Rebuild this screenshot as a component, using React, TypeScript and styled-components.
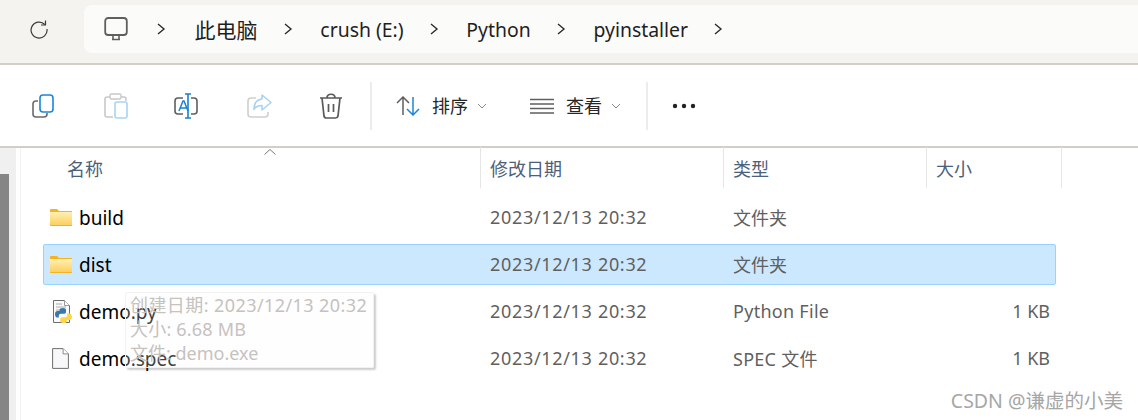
import React from "react";
import styled, { createGlobalStyle } from "styled-components";

const GlobalStyle = createGlobalStyle`
  html, body {
    margin: 0;
    padding: 0;
    background: #fff;
    overflow: hidden;
  }
  body {
    font-family: "Noto Sans", "Noto Sans CJK SC", sans-serif;
  }
`;

const Page = styled.div`
  position: relative;
  width: 1138px;
  height: 420px;
  overflow: hidden;
  display: flex;
  flex-direction: column;
`;

const AddressRow = styled.div`
  height: 65px;
  flex: none;
  box-sizing: border-box;
  padding: 5px 0 10px 0;
  display: flex;
  background: #f5f3f0;
  border-bottom: 2px solid #d2cdc5;
`;

const RefreshSlot = styled.div`
  width: 84px;
  flex: none;
  display: flex;
  align-items: center;
  justify-content: center;
  padding-right: 6px;
  box-sizing: border-box;
`;

const Breadcrumbs = styled.div`
  flex: 1;
  display: flex;
  align-items: center;
  background: #fbfbf9;
  border-radius: 8px 0 0 8px;
  padding-left: 20px;
`;

const Crumb = styled.span<{ $cjk?: boolean }>`
  font-size: ${(p) => (p.$cjk ? 21 : 19.4)}px;
  color: #1f1f1f;
  white-space: nowrap;
  margin: ${(p) => (p.$cjk ? "-1px 0 0 1.2px" : "0")};
`;

const CrumbChevron = styled.svg`
  flex: none;
  width: 10px;
  height: 14px;
  margin: 0 26.4px;
`;

const Toolbar = styled.div`
  height: 83px;
  flex: none;
  box-sizing: border-box;
  display: flex;
  align-items: center;
  background: #fff;
  border-bottom: 2px solid #d2cdc5;
  padding-left: 28px;
`;

const ToolIcon = styled.svg<{ $last?: boolean }>`
  flex: none;
  width: 30px;
  height: 30px;
  margin-right: ${(p) => (p.$last ? 24 : 42)}px;
`;

const ToolDivider = styled.div`
  width: 2px;
  height: 48px;
  flex: none;
  background: #ececec;
`;

const MenuButton = styled.div<{ $width: number }>`
  width: ${(p) => p.$width}px;
  flex: none;
  box-sizing: border-box;
  display: flex;
  align-items: center;
  padding-left: 24px;
`;

const MenuLabel = styled.span`
  font-size: 18px;
  color: #262626;
  margin: -2px 0 0 12px;
`;

const Caret = styled.svg`
  width: 10px;
  height: 6px;
  margin-left: 9px;
`;

const MoreDots = styled.svg`
  width: 24px;
  height: 6px;
  margin-left: 24px;
`;

const Body = styled.div`
  flex: 1;
  display: flex;
`;

const ScrollTrack = styled.div`
  width: 16px;
  flex: none;
  background: #f0f0f0;
  border-right: 1px solid #fff;
  box-shadow: 3px 0 0 #fff, 4px 0 0 #f2f2f2;
`;

const ScrollThumb = styled.div`
  width: 9px;
  height: 100%;
  margin-top: 26px;
  background: #858585;
`;

const ListPane = styled.div`
  flex: 1;
  padding-left: 27px;
`;

const HeaderRow = styled.div`
  position: relative;
  height: 40px;
  display: grid;
  grid-template-columns: 437px 243px 203px 135px;
`;

const HeaderCell = styled.div<{ $first?: boolean }>`
  display: flex;
  align-items: center;
  font-size: 18px;
  color: #4c607a;
  padding-left: ${(p) => (p.$first ? 23 : 9)}px;
  border-right: 1px solid #e5e5e5;
  margin-top: -1px;
`;

const SortCaret = styled.svg`
  position: absolute;
  left: 219px;
  top: 0;
  width: 14px;
  height: 8px;
`;

const Rows = styled.div`
  padding-top: 9px;
  display: flex;
  flex-direction: column;
  gap: 6px;
`;

const Row = styled.div<{ $selected?: boolean }>`
  width: 1013px;
  height: 41px;
  box-sizing: border-box;
  display: grid;
  grid-template-columns: 437px 243px 203px 1fr;
  align-items: center;
  background: ${(p) => (p.$selected ? "#cce8ff" : "transparent")};
  border: 1px solid ${(p) => (p.$selected ? "#99d1ff" : "transparent")};
  border-radius: 2px;
  font-size: 18px;
  margin-left: -1px;
`;

const NameCell = styled.div`
  display: flex;
  align-items: center;
  color: #000;
  font-size: 19px;
  padding-left: 6px;
  white-space: nowrap;
`;

const IconBox = styled.div`
  width: 29px;
  flex: none;
  display: flex;
  align-items: center;
`;

const MetaCell = styled.div<{ $spacing?: number }>`
  color: #5f5f5f;
  padding-left: 9px;
  white-space: nowrap;
  letter-spacing: ${(p) => p.$spacing ?? 0}px;
  margin-top: -1px;
`;

const SizeCell = styled.div`
  color: #5f5f5f;
  text-align: right;
  padding-right: 5px;
  white-space: nowrap;
  margin-top: -1px;
`;

const Tooltip = styled.div`
  position: absolute;
  left: 125px;
  top: 292px;
  width: 249px;
  height: 76px;
  box-sizing: border-box;
  padding: 0 0 0 4px;
  background: rgba(252, 252, 252, 0.25);
  border: 1px solid #f2f2f2;
  border-radius: 2px;
  box-shadow: 2px 2px 2px rgba(0, 0, 0, 0.2);
  color: #c6c2be;
  font-size: 18px;
  line-height: 24px;
  white-space: nowrap;
`;

const TooltipLine = styled.div<{ $spacing?: number }>`
  letter-spacing: ${(p) => p.$spacing ?? 0}px;
`;

const Watermark = styled.div`
  position: absolute;
  right: 15px;
  top: 388px;
  font-size: 19.5px;
  line-height: 26px;
  color: #a6a6a6;
  white-space: nowrap;
`;

const Chevron = () => (
  <CrumbChevron viewBox="0 0 10 14">
    <path d="M1 2l6 5-6 5" fill="none" stroke="#2b2b2b" strokeWidth="1.4" />
  </CrumbChevron>
);

const FolderIcon = () => (
  <svg width="22" height="17" viewBox="0 0 22 17">
    <defs>
      <linearGradient id="folderBody" x1="0" y1="0" x2="0" y2="1">
        <stop offset="0" stopColor="#fff0b4" />
        <stop offset="1" stopColor="#fdcf5f" />
      </linearGradient>
    </defs>
    <path d="M0 1a1 1 0 0 1 1-1h6l2 2h13v15H0z" fill="#f5b31f" />
    <rect y="3" width="22" height="13" fill="url(#folderBody)" />
  </svg>
);

const PythonIcon = () => (
  <svg width="19" height="23" viewBox="0 0 19 23" style={{ marginLeft: 3 }}>
    <path d="M.5.5h11l5 5v17H.5z" fill="#fafafa" stroke="#6e6e6e" />
    <path d="M11.500.5v5h5" fill="#fff" stroke="#9a9a9a" />
    <path d="M3 4h6M3 7h10M3 10h4" stroke="#a8a8a8" />
    <path d="M10 8c-2.500 0-3.500.8-3.500 2.300V11h-2C3 11 2 12.200 2 14s.8 3.500 2 3.500h1.800v-1.800c0-1.200 1-2 2-2h3.500c1 0 1.700-.8 1.700-1.700v-2.500C13 8.800 11.800 8 10 8z" fill="#3a78ab" />
    <path d="M10.500 23c2.500 0 3.500-.8 3.500-2.300V20h2.500c1.200 0 2.500-1.200 2.500-3s-1-3.500-2.500-3.500h-2.200v1.800c0 1.200-1 2-2 2H9c-1 0-1.700.8-1.700 1.700v1.700c0 1.500 1.400 2.300 3.200 2.300z" fill="#fdd54a" />
  </svg>
);

const BlankFileIcon = () => (
  <svg width="17" height="21" viewBox="0 0 17 21" style={{ marginLeft: 2 }}>
    <path d="M.6.6h10.500l5.300 5.300v14.500H.6z" fill="#f8f8fa" stroke="#6f6f6f" />
    <path d="M11.100.6v5.300h5.300" fill="#fff" stroke="#8a8a8a" />
  </svg>
);

export default function App() {
  return (
    <Page>
      <GlobalStyle />
      <AddressRow>
        <RefreshSlot>
          <svg width="20" height="20" viewBox="0 0 20 20">
            <path d="M15.800 5.500A8 8 0 1 0 18 10" fill="none" stroke="#3a3a3a" strokeWidth="1.200" />
            <path d="M16.500 1.500v4.500H12" fill="none" stroke="#3a3a3a" strokeWidth="1.200" />
          </svg>
        </RefreshSlot>
        <Breadcrumbs>
          <svg width="24" height="24" viewBox="0 0 24 24" style={{ marginRight: 2.6 }}>
            <rect x="1.200" y="1" width="21.600" height="17" rx="3" fill="none" stroke="#5f5f5f" strokeWidth="1.800" />
            <path d="M8 22.500h8M9 18v4M15 18v4" stroke="#5f5f5f" strokeWidth="1.600" />
          </svg>
          <Chevron />
          <Crumb $cjk>此电脑</Crumb>
          <Chevron />
          <Crumb>crush (E:)</Crumb>
          <Chevron />
          <Crumb>Python</Crumb>
          <Chevron />
          <Crumb>pyinstaller</Crumb>
          <Chevron />
        </Breadcrumbs>
      </AddressRow>
      <Toolbar>
        <ToolIcon viewBox="0 0 30 30">
          <path d="M10 10H8a3 3 0 0 0-3 3v10a3 3 0 0 0 3 3h8a3 3 0 0 0 3-3v-1" fill="none" stroke="#6a6a6a" strokeWidth="1.600" />
          <rect x="12" y="4" width="13" height="17" rx="3" fill="#fff" stroke="#1a86dc" strokeWidth="1.600" />
        </ToolIcon>
        <ToolIcon viewBox="0 0 30 30">
          <path d="M10 6H7a2 2 0 0 0-2 2v16a2 2 0 0 0 2 2h6M21 6h3a2 2 0 0 1 2 2v2" fill="none" stroke="#c8c8c8" strokeWidth="1.600" />
          <rect x="10" y="3" width="11" height="5" rx="1.500" fill="#fff" stroke="#c8c8c8" strokeWidth="1.400" />
          <rect x="15" y="11" width="12" height="16" rx="2" fill="#fff" stroke="#a9d3f3" strokeWidth="1.600" />
        </ToolIcon>
        <ToolIcon viewBox="0 0 30 30">
          <path d="M11 7H6a3 3 0 0 0-3 3v10a3 3 0 0 0 3 3h5M19 7h3a3 3 0 0 1 3 3v10a3 3 0 0 1-3 3h-3" fill="none" stroke="#5e5e5e" strokeWidth="1.600" />
          <path d="M7 20l4-10h1l4 10M8.500 17h6" fill="none" stroke="#1a7fd0" strokeWidth="1.500" />
          <path d="M13 3h6M13 27h6M16 3v24" fill="none" stroke="#1a7fd0" strokeWidth="1.600" />
        </ToolIcon>
        <ToolIcon viewBox="0 0 30 30">
          <path d="M12 7H7a3 3 0 0 0-3 3v13a3 3 0 0 0 3 3h14a3 3 0 0 0 3-3v-2" fill="none" stroke="#cfcfcf" strokeWidth="1.600" />
          <path d="M18 4l9 7.500-9 7.500v-4.500c-4 0-6.500 1-8 4 0-6 3-10 8-10.500z" fill="#fff" stroke="#a9d3f3" strokeWidth="1.600" strokeLinejoin="round" />
        </ToolIcon>
        <ToolIcon $last viewBox="0 0 30 30">
          <path d="M4 7h22M11 7c0-5 8-5 8 0M6 7l2 18a2.500 2.500 0 0 0 2.500 2h9a2.500 2.500 0 0 0 2.500-2l2-18M12.500 13v8M17.500 13v8" fill="none" stroke="#5a5a5a" strokeWidth="1.700" />
        </ToolIcon>
        <ToolDivider />
        <MenuButton $width={134}>
          <svg width="24" height="20" viewBox="0 0 24 20">
            <path d="M1 7l6-6 6 6M7 1v18" fill="none" stroke="#5f5f5f" strokeWidth="1.500" />
            <path d="M11 13l6 6 6-6M17 1v18" fill="none" stroke="#1a86dc" strokeWidth="1.500" />
          </svg>
          <MenuLabel>排序</MenuLabel>
          <Caret viewBox="0 0 10 6">
            <path d="M1 1l4 4 4-4" fill="none" stroke="#8a8a8a" />
          </Caret>
        </MenuButton>
        <MenuButton $width={140}>
          <svg width="24" height="16" viewBox="0 0 24 16">
            <path d="M0 1.500h24M0 6h24M0 10.500h24M0 15h24" stroke="#5f5f5f" strokeWidth="1.300" />
          </svg>
          <MenuLabel>查看</MenuLabel>
          <Caret viewBox="0 0 10 6">
            <path d="M1 1l4 4 4-4" fill="none" stroke="#8a8a8a" />
          </Caret>
        </MenuButton>
        <ToolDivider />
        <MoreDots viewBox="0 0 24 6">
          <circle cx="3" cy="3" r="2.200" fill="#222" />
          <circle cx="12" cy="3" r="2.200" fill="#222" />
          <circle cx="21" cy="3" r="2.200" fill="#222" />
        </MoreDots>
      </Toolbar>
      <Body>
        <ScrollTrack>
          <ScrollThumb />
        </ScrollTrack>
        <ListPane>
          <HeaderRow>
            <HeaderCell $first>名称</HeaderCell>
            <HeaderCell>修改日期</HeaderCell>
            <HeaderCell>类型</HeaderCell>
            <HeaderCell>大小</HeaderCell>
            <SortCaret viewBox="0 0 14 8">
              <path d="M1.500 6.500L7 1.500l5.500 5" fill="none" stroke="#7a7a7a" />
            </SortCaret>
          </HeaderRow>
          <Rows>
            <Row>
              <NameCell><IconBox><FolderIcon /></IconBox>build</NameCell>
              <MetaCell $spacing={0.68}>2023/12/13 20:32</MetaCell>
              <MetaCell>文件夹</MetaCell>
              <SizeCell />
            </Row>
            <Row $selected>
              <NameCell><IconBox><FolderIcon /></IconBox>dist</NameCell>
              <MetaCell $spacing={0.68}>2023/12/13 20:32</MetaCell>
              <MetaCell>文件夹</MetaCell>
              <SizeCell />
            </Row>
            <Row>
              <NameCell><IconBox><PythonIcon /></IconBox>demo.py</NameCell>
              <MetaCell $spacing={0.68}>2023/12/13 20:32</MetaCell>
              <MetaCell $spacing={0.28}>Python File</MetaCell>
              <SizeCell>1 KB</SizeCell>
            </Row>
            <Row>
              <NameCell><IconBox><BlankFileIcon /></IconBox>demo.spec</NameCell>
              <MetaCell $spacing={0.68}>2023/12/13 20:32</MetaCell>
              <MetaCell $spacing={0.28}>SPEC 文件</MetaCell>
              <SizeCell>1 KB</SizeCell>
            </Row>
          </Rows>
        </ListPane>
      </Body>
      <Tooltip>
        <TooltipLine $spacing={0.42}>创建日期: 2023/12/13 20:32</TooltipLine>
        <TooltipLine $spacing={0.2}>大小: 6.68 MB</TooltipLine>
        <TooltipLine>文件: demo.exe</TooltipLine>
      </Tooltip>
      <Watermark>CSDN @谦虚的小美</Watermark>
    </Page>
  );
}
